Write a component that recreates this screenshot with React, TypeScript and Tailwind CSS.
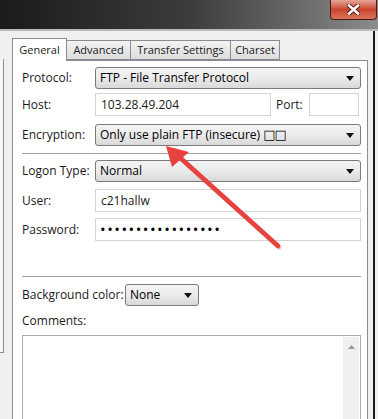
const selectCls =
  'flex items-center justify-between h-[22px] pl-[4px] pr-[6px] border border-[#7a7a7a] rounded-[3px] bg-gradient-to-b from-[#f3f3f3] via-[#ebebeb] to-[#d9d9d9] text-black'

function Caret() {
  return (
    <svg width="8" height="5" viewBox="0 0 8 5" className="shrink-0">
      <path d="M0 0h8L4 5z" fill="#111" />
    </svg>
  )
}

function Select({ value, className = '' }: { value: React.ReactNode; className?: string }) {
  return (
    <div className={`${selectCls} ${className}`}>
      <span className="truncate">{value}</span>
      <Caret />
    </div>
  )
}

function Input({ value, className = '' }: { value?: string; className?: string }) {
  return (
    <div className={`h-[23px] flex items-center pl-[5px] border border-[#d4d4d4] bg-white ${className}`}>
      {value}
    </div>
  )
}

function Row({ label, children, className = '' }: { label: string; children: React.ReactNode; className?: string }) {
  return (
    <div className={`flex items-center ${className}`}>
      <div className="w-[73px] shrink-0">{label}</div>
      <div className="flex-1 min-w-0">{children}</div>
    </div>
  )
}

export default function App() {
  const tabs = [
    { label: 'Advanced', w: 'w-[64px]' },
    { label: 'Transfer Settings', w: 'w-[100px]' },
    { label: 'Charset', w: 'w-[49px]' },
  ]

  return (
    <div
      className="relative w-[378px] h-[419px] overflow-hidden bg-[#f0f0f0] text-[12px] text-[#1a1a1a]"
      style={{ fontFamily: '"Open Sans", "Noto Sans", sans-serif' }}
    >
      {/* title bar */}
      <div className="h-[29px] flex justify-end bg-gradient-to-r from-[#1b1b1b] via-[#3c3c3c] to-[#8c8c8c]">
        <div className="w-[47px] h-[20px] mr-px flex items-center justify-center rounded-b-[4px] border border-t-0 border-[#4a1c14] bg-gradient-to-b from-[#e4a597] via-[#c9442e] to-[#d9725d]">
          <svg width="13" height="11" viewBox="0 0 13 11">
            <path d="M2 1.5L11 9.5M11 1.5L2 9.5" stroke="#5a1a10" strokeWidth="4.5" strokeLinecap="square" />
            <path d="M2 1.5L11 9.5M11 1.5L2 9.5" stroke="#fff" strokeWidth="2.6" strokeLinecap="square" />
          </svg>
        </div>
      </div>
      <div className="h-[2px] bg-[#b9b9b9]" />

      <div className="flex">
        {/* site tree edge */}
        <div className="w-[4px] h-[294px] mt-[28px] bg-[#f7f7f7] border-r border-b border-[#8e8f8f]" />

        {/* tab control */}
        <div className="ml-[8px] w-[356px] pt-[6px]">
          <div className="flex items-end h-[23px] text-[11px]">
            <div className="h-[23px] w-[55px] flex items-center justify-center bg-white border border-b-0 border-[#898c95] -mb-px relative z-10">
              General
            </div>
            {tabs.map((t) => (
              <div
                key={t.label}
                className={`h-[20px] ${t.w} flex items-center justify-center border border-l-0 border-[#898c95] bg-gradient-to-b from-[#f3f3f3] to-[#dcdcdc]`}
              >
                {t.label}
              </div>
            ))}
          </div>

          <div className="h-[400px] border border-[#898c95] bg-white pl-[9px] pr-[6px] pt-[6px]">
            <Row label="Protocol:">
              <Select value="FTP - File Transfer Protocol" />
            </Row>
            <Row label="Host:" className="mt-[4px]">
              <div className="flex items-center">
                <Input value="103.28.49.204" className="w-[176px]" />
                <span className="ml-[5px] w-[33px]">Port:</span>
                <Input className="w-[50px]" />
              </div>
            </Row>
            <Row label="Encryption:" className="mt-[8px]">
              <Select
                value={
                  <>
                    Only use plain FTP (insecure){' '}
                    <span className="text-[13px] leading-none tracking-[-1px]" style={{ fontFamily: '"DejaVu Sans", sans-serif' }}>
                      □□
                    </span>
                  </>
                }
              />
            </Row>
            <div className="h-px bg-[#a0a0a0] mt-[7px]" />
            <Row label="Logon Type:" className="mt-[6px]">
              <Select value="Normal" />
            </Row>
            <Row label="User:" className="mt-[7px]">
              <Input value="c21hallw" />
            </Row>
            <Row label="Password:" className="mt-[6px]">
              <div className="h-[23px] flex items-center pl-[4px] border border-[#d4d4d4] bg-white text-[15px] tracking-[1.5px] text-black">
                •••••••••••••••••
              </div>
            </Row>
            <div className="h-px bg-[#a0a0a0] mt-[35px]" />
            <div className="flex items-center mt-[7px]">
              <span className="w-[103px]">Background color:</span>
              <Select value="None" className="w-[74px]" />
            </div>
            <div className="mt-[6px]">Comments:</div>
            <div className="mt-[5px] h-[120px] border border-[#adadad] bg-white flex justify-end">
              <div className="w-[16px] mr-[1px] mt-px bg-[#efefef] flex justify-center pt-[8px]">
                <svg width="7" height="4" viewBox="0 0 7 4">
                  <path d="M0 4L3.5 0L7 4z" fill="#9a9a9a" />
                </svg>
              </div>
            </div>
          </div>
        </div>

        {/* window frame right */}
        <div className="ml-[5px] w-[2px] h-[400px] bg-[#1a1a1a]" />
      </div>

      {/* red arrow */}
      <svg className="absolute inset-0 pointer-events-none" width="378" height="419">
        <line x1="278" y1="246" x2="176" y2="154" stroke="#b83535" strokeWidth="5" strokeLinecap="round" opacity="0.3" transform="translate(1 1)" />
        <line x1="278" y1="246" x2="176" y2="154" stroke="#e8423f" strokeWidth="4.5" strokeLinecap="round" />
        <polygon points="166,146 189,152 172,167" fill="#e8423f" />
      </svg>
    </div>
  )
}
